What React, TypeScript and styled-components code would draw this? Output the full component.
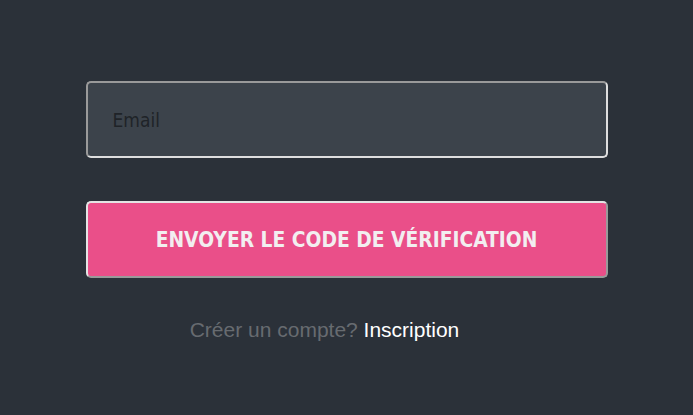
import React from 'react';
import styled, { createGlobalStyle } from 'styled-components';

const GlobalStyle = createGlobalStyle`
  html, body {
    margin: 0;
    padding: 0;
    background-color: #2b3139;
  }
`;

const Page = styled('main')`
  min-height: 415px;
  display: flex;
  justify-content: center;
  padding-top: 81px;
  box-sizing: border-box;
`;

const Form = styled('form')`
  width: 522px;
  display: flex;
  flex-direction: column;
`;

const EmailInput = styled('input')`
  height: 77px;
  box-sizing: border-box;
  padding: 0 25px;
  border: 2px solid;
  border-color: #9a9a9a #dedede #dedede #9a9a9a;
  border-radius: 5px;
  background-color: #3c434b;
  color: #ddd;
  font-family: 'DejaVu Sans Condensed', 'DejaVu Sans', sans-serif;
  font-size: 19px;
  outline: none;

  &::placeholder {
    color: #1f2328;
  }
`;

const SubmitButton = styled('button')`
  margin-top: 43px;
  height: 77px;
  border: 2px solid;
  border-color: #e4e4e4 #9a9a9a #9a9a9a #e4e4e4;
  border-radius: 5px;
  background-color: #ea4f89;
  color: #f2eef0;
  font-family: 'DejaVu Sans Condensed', 'DejaVu Sans', sans-serif;
  font-weight: bold;
  font-size: 20.8px;
  cursor: pointer;
`;

const Footer = styled('p')`
  margin: 40px 0 0;
  padding-right: 44px;
  text-align: center;
  font-family: 'Liberation Sans', Arial, sans-serif;
  font-size: 21px;
  color: #676b70;
`;

const SignUp = styled('a')`
  color: #ffffff;
  text-decoration: none;
`;

export default function App() {
  return (
    <>
      <GlobalStyle />
      <Page>
        <Form onSubmit={(e) => e.preventDefault()}>
          <EmailInput type="email" placeholder="Email" />
          <SubmitButton type="submit">ENVOYER LE CODE DE VÉRIFICATION</SubmitButton>
          <Footer>
            Créer un compte? <SignUp href="#">Inscription</SignUp>
          </Footer>
        </Form>
      </Page>
    </>
  );
}
